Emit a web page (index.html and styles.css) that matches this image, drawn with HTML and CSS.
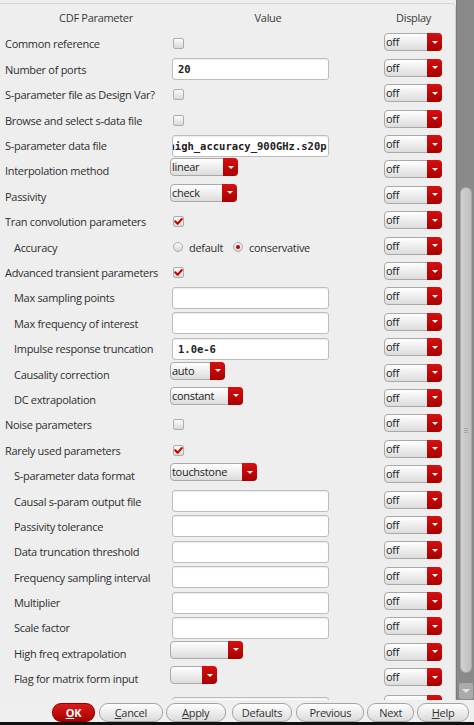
FILE: index.html
```html
<!DOCTYPE html>
<html>
<head>
<meta charset="utf-8">
<link rel="stylesheet" href="styles.css">
</head>
<body>
<div class="main">
  <div class="panel">
    <div class="hdr">
      <span class="h1">CDF Parameter</span>
      <span class="h2">Value</span>
      <span class="h3">Display</span>
    </div>
    <div class="rows">
      <div class="row"><span class="lbl">Common reference</span><span class="cb"></span><div class="dd"><span class="t">off</span><span class="b"><i></i></span></div></div>
      <div class="row"><span class="lbl">Number of ports</span><div class="tb">20</div><div class="dd"><span class="t">off</span><span class="b"><i></i></span></div></div>
      <div class="row"><span class="lbl">S-parameter file as Design Var?</span><span class="cb"></span><div class="dd"><span class="t">off</span><span class="b"><i></i></span></div></div>
      <div class="row"><span class="lbl">Browse and select s-data file</span><span class="cb"></span><div class="dd"><span class="t">off</span><span class="b"><i></i></span></div></div>
      <div class="row"><span class="lbl">S-parameter data file</span><div class="tb"><span class="scrolled">high_accuracy_900GHz.s20p</span></div><div class="dd"><span class="t">off</span><span class="b"><i></i></span></div></div>
      <div class="row"><span class="lbl">Interpolation method</span><div class="vd w68"><span class="t">linear</span><span class="b"><i></i></span></div><div class="dd"><span class="t">off</span><span class="b"><i></i></span></div></div>
      <div class="row"><span class="lbl">Passivity</span><div class="vd w67"><span class="t">check</span><span class="b"><i></i></span></div><div class="dd"><span class="t">off</span><span class="b"><i></i></span></div></div>
      <div class="row"><span class="lbl">Tran convolution parameters</span><span class="cb"><svg viewBox="0 0 11 11" width="11" height="11"><path d="M2.2 5.3 L4.6 7.8 L8.8 3" /></svg></span><div class="dd"><span class="t">off</span><span class="b"><i></i></span></div></div>
      <div class="row"><span class="lbl ind">Accuracy</span><div class="radios"><span class="rb"></span><span class="rt">default</span><span class="rb on"></span><span class="rt">conservative</span></div><div class="dd"><span class="t">off</span><span class="b"><i></i></span></div></div>
      <div class="row"><span class="lbl">Advanced transient parameters</span><span class="cb"><svg viewBox="0 0 11 11" width="11" height="11"><path d="M2.2 5.3 L4.6 7.8 L8.8 3" /></svg></span><div class="dd"><span class="t">off</span><span class="b"><i></i></span></div></div>
      <div class="row"><span class="lbl ind">Max sampling points</span><div class="tb"></div><div class="dd"><span class="t">off</span><span class="b"><i></i></span></div></div>
      <div class="row"><span class="lbl ind">Max frequency of interest</span><div class="tb"></div><div class="dd"><span class="t">off</span><span class="b"><i></i></span></div></div>
      <div class="row"><span class="lbl ind">Impulse response truncation</span><div class="tb">1.0e-6</div><div class="dd"><span class="t">off</span><span class="b"><i></i></span></div></div>
      <div class="row"><span class="lbl ind">Causality correction</span><div class="vd w55"><span class="t">auto</span><span class="b"><i></i></span></div><div class="dd"><span class="t">off</span><span class="b"><i></i></span></div></div>
      <div class="row"><span class="lbl ind">DC extrapolation</span><div class="vd w73"><span class="t">constant</span><span class="b"><i></i></span></div><div class="dd"><span class="t">off</span><span class="b"><i></i></span></div></div>
      <div class="row"><span class="lbl">Noise parameters</span><span class="cb"></span><div class="dd"><span class="t">off</span><span class="b"><i></i></span></div></div>
      <div class="row"><span class="lbl">Rarely used parameters</span><span class="cb"><svg viewBox="0 0 11 11" width="11" height="11"><path d="M2.2 5.3 L4.6 7.8 L8.8 3" /></svg></span><div class="dd"><span class="t">off</span><span class="b"><i></i></span></div></div>
      <div class="row"><span class="lbl ind">S-parameter data format</span><div class="vd w87"><span class="t">touchstone</span><span class="b"><i></i></span></div><div class="dd"><span class="t">off</span><span class="b"><i></i></span></div></div>
      <div class="row"><span class="lbl ind">Causal s-param output file</span><div class="tb"></div><div class="dd"><span class="t">off</span><span class="b"><i></i></span></div></div>
      <div class="row"><span class="lbl ind">Passivity tolerance</span><div class="tb"></div><div class="dd"><span class="t">off</span><span class="b"><i></i></span></div></div>
      <div class="row"><span class="lbl ind">Data truncation threshold</span><div class="tb"></div><div class="dd"><span class="t">off</span><span class="b"><i></i></span></div></div>
      <div class="row"><span class="lbl ind">Frequency sampling interval</span><div class="tb"></div><div class="dd"><span class="t">off</span><span class="b"><i></i></span></div></div>
      <div class="row"><span class="lbl ind">Multiplier</span><div class="tb"></div><div class="dd"><span class="t">off</span><span class="b"><i></i></span></div></div>
      <div class="row"><span class="lbl ind">Scale factor</span><div class="tb"></div><div class="dd"><span class="t">off</span><span class="b"><i></i></span></div></div>
      <div class="row"><span class="lbl ind">High freq extrapolation</span><div class="vd w73"><span class="t"></span><span class="b"><i></i></span></div><div class="dd"><span class="t">off</span><span class="b"><i></i></span></div></div>
      <div class="row"><span class="lbl ind">Flag for matrix form input</span><div class="vd w47"><span class="t"></span><span class="b"><i></i></span></div><div class="dd"><span class="t">off</span><span class="b"><i></i></span></div></div>
      <div class="row last"><span class="lbl ind"></span><div class="tb"></div><div class="dd"><span class="t"></span><span class="b"><i></i></span></div></div>
    </div>
  </div>
  <div class="scroll">
    <div class="thumb"><span class="grip"></span></div>
    <div class="down"><i></i></div>
  </div>
</div>
<div class="bar">
  <button class="btn ok"><u>O</u>K</button>
  <button class="btn b-cancel"><u>C</u>ancel</button>
  <button class="btn b-apply"><u>A</u>pply</button>
  <button class="btn b-def">Defaults</button>
  <button class="btn b-prev">Previous</button>
  <button class="btn b-next">Next</button>
  <button class="btn b-help"><u>H</u>elp</button>
</div>
<div class="black"></div>
</body>
</html>
```

FILE: styles.css
```css
html, body {
  margin: 0;
  padding: 0;
}
body {
  width: 474px;
  height: 725px;
  overflow: hidden;
  background: #efefef;
  font-family: "Open Sans", "Noto Sans", sans-serif;
  font-size: 11px;
  letter-spacing: -0.3px;
  color: #333;
}
.main {
  display: flex;
  height: 700px;
}
.panel {
  width: 455px;
  margin-top: 3px;
  border-top: 1px solid #d2d2d2;
  border-right: 1px solid #d2d2d2;
  border-top-right-radius: 5px;
  background: #eeeeee;
  overflow: hidden;
}
.hdr {
  display: grid;
  grid-template-columns: 192px 152px 1fr;
  height: 27.3px;
  align-items: center;
  color: #3a3a3a;
}
.hdr span { text-align: center; }
.hdr .h3 { padding-left: 37px; padding-right: 9px; }
.row {
  display: grid;
  grid-template-columns: 170px 214px 58px;
  height: 25.4px;
  align-items: center;
}
.lbl {
  padding-left: 5px;
  white-space: nowrap;
  color: #2e2e2e;
}
.lbl.ind { padding-left: 14px; }

/* checkbox */
.cb {
  margin-left: 3px;
  width: 11px;
  height: 11px;
  box-sizing: border-box;
  border: 1px solid #aeaeae;
  border-radius: 2px;
  background: linear-gradient(#fbfbfb, #d9d9d9);
  position: relative;
}
.cb svg {
  position: absolute;
  left: -1px;
  top: -1px;
}
.cb path {
  fill: none;
  stroke: #c40000;
  stroke-width: 2;
  stroke-linecap: round;
  stroke-linejoin: round;
}

/* text box */
.tb {
  margin-left: 2px;
  width: 157px;
  height: 22px;
  box-sizing: border-box;
  border: 1px solid #bdbdbd;
  border-radius: 3px;
  background: #fff;
  box-shadow: inset 0 1px 1px rgba(0,0,0,0.08);
  font: bold 10.5px "DejaVu Sans Mono", monospace;
  letter-spacing: 0;
  color: #222;
  padding-left: 5px;
  line-height: 20px;
  white-space: nowrap;
  overflow: hidden;
}
.tb .scrolled {
  display: inline-block;
  margin-left: -9.5px;
}

/* dropdowns */
.dd, .vd {
  display: flex;
  height: 18px;
  box-sizing: border-box;
  border: 1px solid #a9a9a9;
  border-radius: 4px;
  background: linear-gradient(#ffffff, #dcdcdc);
}
.dd { margin-bottom: 3px; }
.vd { margin-bottom: 7px; }
.dd .t, .vd .t {
  flex: 1;
  padding-left: 1px;
  line-height: 15px;
  color: #222;
  white-space: nowrap;
  overflow: hidden;
}
.b {
  width: 15px;
  margin: -1px -1px -1px 0;
  border-radius: 0 4px 4px 0;
  background: linear-gradient(#d70f0f, #a80000);
  display: flex;
  align-items: center;
  justify-content: center;
}
.b i, .down i {
  width: 0;
  height: 0;
  border-left: 3px solid transparent;
  border-right: 3px solid transparent;
  border-top: 3px solid #fff;
}
.w68 { width: 68px; }
.w67 { width: 67px; }
.w55 { width: 55px; }
.w73 { width: 73px; }
.w87 { width: 87px; }
.w47 { width: 47px; }

/* radios */
.radios {
  display: flex;
  align-items: center;
  padding-left: 3px;
}
.rb {
  width: 10px;
  height: 10px;
  box-sizing: border-box;
  border: 1px solid #aaa;
  border-radius: 50%;
  background: linear-gradient(#fcfcfc, #d6d6d6);
  display: flex;
  align-items: center;
  justify-content: center;
}
.rb.on::after {
  content: "";
  width: 4px;
  height: 4px;
  border-radius: 50%;
  background: #c40000;
}
.rt {
  padding-left: 6px;
  padding-right: 10px;
  color: #2e2e2e;
}
.row.last .tb { margin-top: 6px; }

/* scrollbar */
.scroll {
  width: 18px;
  background: #8a8a8a;
  border-left: 1px solid #7a7a7a;
  box-sizing: border-box;
  display: flex;
  flex-direction: column;
  align-items: center;
}
.thumb {
  margin-top: 187px;
  width: 12px;
  height: 486px;
  border-radius: 6px;
  box-sizing: border-box;
  border: 1px solid #a9a9a9;
  background: linear-gradient(to right, #d0d0d0, #bfbfbf);
  display: flex;
  align-items: center;
  justify-content: center;
}
.grip {
  width: 4px;
  height: 5px;
  border-top: 1px solid #a8a8a8;
  border-bottom: 1px solid #a8a8a8;
  box-sizing: border-box;
  background: linear-gradient(transparent 1px, #a8a8a8 1px, #a8a8a8 2px, transparent 2px);
}
.down {
  margin-top: 10px;
  width: 14px;
  height: 16px;
  background: #ababab;
  border-radius: 2px;
  display: flex;
  align-items: center;
  justify-content: center;
}
.down i { border-top-color: #e4e4e4; border-left-width: 4px; border-right-width: 4px; border-top-width: 4px; }

/* buttons */
.bar {
  height: 22px;
  box-sizing: border-box;
  padding: 3px 5px 0 52px;
  display: flex;
  gap: 3px;
}
.btn {
  height: 19px;
  box-sizing: border-box;
  border: 1px solid #a4a4a4;
  border-radius: 9px;
  background: linear-gradient(#ffffff, #dadada);
  font-family: "Open Sans", "Noto Sans", sans-serif;
  font-size: 11px;
  letter-spacing: -0.3px;
  color: #333;
  padding: 0;
  line-height: 16px;
  text-align: center;
}
.btn u { text-decoration-thickness: 1px; }
.ok {
  width: 43px;
  background: linear-gradient(#dd1a1a, #a80000);
  border-color: #8a0000;
  color: #fff;
  font-weight: bold;
}
.b-cancel { width: 64px; margin-left: 1px; }
.b-apply { width: 60px; }
.b-def { width: 61px; margin-left: 3px; }
.b-prev { width: 68px; margin-left: 1px; }
.b-next { width: 47px; }
.b-help { width: 52px; }
.black {
  height: 3px;
  background: #111;
}
```
